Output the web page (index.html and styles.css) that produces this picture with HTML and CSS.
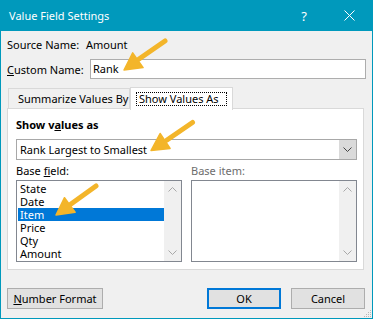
FILE: index.html
```html
<!DOCTYPE html>
<html>
<head>
<meta charset="utf-8">
<link rel="stylesheet" href="styles.css">
</head>
<body>
<div class="window">
  <div class="titlebar">
    <span class="title">Value Field Settings</span>
    <div class="tb-btns">
      <span class="tb-btn help">?</span>
      <span class="tb-btn close"><svg width="11" height="11" viewBox="0 0 11 11"><path d="M0.5 0.5 L10.5 10.5 M10.5 0.5 L0.5 10.5" stroke="#fff" stroke-width="1" fill="none"/></svg></span>
    </div>
  </div>
  <div class="body">
    <div class="row source"><span class="label label-source">Source Name:</span><span>Amount</span></div>
    <div class="row custom"><span class="label label-custom"><u>C</u>ustom Name:</span><div class="input">Rank</div></div>
    <div class="tabs">
      <div class="tab">Summarize Values By</div>
      <div class="tab active"><span class="focus">Show Values As</span></div>
    </div>
    <div class="panel">
      <div class="group-title">Show v<u>a</u>lues as</div>
      <div class="select">
        <span class="select-text">Rank Largest to Smallest</span>
        <span class="select-btn"><svg width="9" height="6" viewBox="0 0 9 6"><path d="M0.5 0.5 L4.5 4.5 L8.5 0.5" stroke="#444" stroke-width="1" fill="none"/></svg></span>
      </div>
      <div class="lists">
        <div class="col">
          <div class="lbl">Base <u>f</u>ield:</div>
          <div class="listbox">
            <div class="items">
              <div class="item">State</div>
              <div class="item">Date</div>
              <div class="item selected">Item</div>
              <div class="item">Price</div>
              <div class="item">Qty</div>
              <div class="item">Amount</div>
            </div>
            <div class="scroll">
              <span class="sarrow"><svg width="9" height="5" viewBox="0 0 9 5"><path d="M0.5 4.5 L4.5 0.5 L8.5 4.5" stroke="#a8a8a8" stroke-width="1" fill="none"/></svg></span>
              <span class="sarrow"><svg width="9" height="5" viewBox="0 0 9 5"><path d="M0.5 0.5 L4.5 4.5 L8.5 0.5" stroke="#a8a8a8" stroke-width="1" fill="none"/></svg></span>
            </div>
          </div>
        </div>
        <div class="col disabled">
          <div class="lbl">Base item:</div>
          <div class="listbox">
            <div class="items"></div>
            <div class="scroll">
              <span class="sarrow"><svg width="9" height="5" viewBox="0 0 9 5"><path d="M0.5 4.5 L4.5 0.5 L8.5 4.5" stroke="#a8a8a8" stroke-width="1" fill="none"/></svg></span>
              <span class="sarrow"><svg width="9" height="5" viewBox="0 0 9 5"><path d="M0.5 0.5 L4.5 4.5 L8.5 0.5" stroke="#a8a8a8" stroke-width="1" fill="none"/></svg></span>
            </div>
          </div>
        </div>
      </div>
    </div>
    <div class="buttons">
      <div class="btn btn-wide"><u>N</u>umber Format</div>
      <div class="btn btn-ok">OK</div>
      <div class="btn">Cancel</div>
    </div>
  </div>
  <svg class="grip" width="10" height="10" viewBox="0 0 10 10">
    <rect x="8" y="2" width="1" height="1" fill="#b8b8b8"/>
    <rect x="6" y="4" width="1" height="1" fill="#b8b8b8"/>
    <rect x="8" y="4" width="1" height="1" fill="#b8b8b8"/>
    <rect x="4" y="6" width="1" height="1" fill="#b8b8b8"/>
    <rect x="6" y="6" width="1" height="1" fill="#b8b8b8"/>
    <rect x="8" y="6" width="1" height="1" fill="#b8b8b8"/>
    <rect x="2" y="8" width="1" height="1" fill="#b8b8b8"/>
    <rect x="4" y="8" width="1" height="1" fill="#b8b8b8"/>
    <rect x="6" y="8" width="1" height="1" fill="#b8b8b8"/>
    <rect x="8" y="8" width="1" height="1" fill="#b8b8b8"/>
  </svg>
  <svg class="arrows" width="373" height="319" viewBox="0 0 373 319">
    <g fill="#f3b52a" stroke="#f3b52a" stroke-linejoin="round">
      <line x1="165" y1="41" x2="139" y2="59" stroke-width="5" stroke-linecap="round"/>
      <polygon points="124,70 132.7,52.9 143.1,67.6" stroke-width="1.5"/>
      <line x1="192.5" y1="122.5" x2="167" y2="140" stroke-width="5" stroke-linecap="round"/>
      <polygon points="151,150.5 160.1,133.5 170.1,148.5" stroke-width="1.5"/>
      <line x1="96" y1="186" x2="71" y2="204" stroke-width="5" stroke-linecap="round"/>
      <polygon points="56,215 64.5,197.7 75.1,212.3" stroke-width="1.5"/>
    </g>
  </svg>
</div>
</body>
</html>
```

FILE: styles.css
```css
* { box-sizing: border-box; }
html, body { margin: 0; padding: 0; }
body {
  font-family: "Noto Sans", "Liberation Sans", sans-serif;
  font-size: 11px;
  color: #000;
  background: #fff;
}
u { text-decoration: underline; text-underline-offset: 1px; }

.window {
  position: relative;
  width: 373px;
  height: 319px;
  background: #0099bc;
  display: flex;
  flex-direction: column;
}

.titlebar {
  height: 31px;
  display: flex;
  align-items: center;
  color: #fff;
  flex: none;
}
.title { padding-left: 9px; font-size: 11px; }
.tb-btns { margin-left: auto; display: flex; height: 100%; }
.tb-btn {
  width: 46px;
  height: 100%;
  display: flex;
  align-items: center;
  justify-content: center;
}
.help { font-size: 13px; padding-top: 1px; }
.close { padding-right: 2px; }

.body {
  flex: 1;
  margin: 0 1px 1px;
  background: #f0f0f0;
  padding: 6px 6px 0;
  display: flex;
  flex-direction: column;
}

.row { display: flex; align-items: center; }
.source { height: 16px; line-height: 16px; }
.label-source { width: 79px; }
.custom { margin-top: 6px; height: 20px; }
.label-custom { width: 83px; }
.input {
  flex: 1;
  height: 20px;
  line-height: 18px;
  border: 1px solid #adadad;
  background: #fff;
  padding-left: 2px;
}

.tabs {
  margin-top: 8px;
  height: 22px;
  margin-bottom: -1px;
  display: flex;
  align-items: flex-end;
  padding-left: 1px;
}
.tab {
  height: 21px;
  width: 122px;
  border: 1px solid #d9d9d9;
  border-bottom: none;
  background: #f0f0f0;
  padding-left: 9px;
  line-height: 20px;
}
.tab.active {
  position: relative;
  z-index: 1;
  width: 103px;
  height: 23px;
  align-self: flex-start;
  margin-bottom: -1px;
  background: #fff;
  padding: 4px 0 0 5px;
  line-height: 12px;
}
.focus {
  display: inline-block;
  height: 14px;
  width: 91px;
  border: 1px dotted #000;
  padding-left: 2px;
}

.panel {
  width: 357px;
  height: 162px;
  border: 1px solid #d9d9d9;
  background: #fff;
  padding: 8px 6px 0 8px;
}
.group-title { height: 16px; line-height: 16px; font-weight: bold; }
.select {
  margin-top: 6px;
  height: 21px;
  border: 1px solid #a8a8a8;
  display: flex;
  align-items: stretch;
}
.select-text { flex: 1; padding-left: 3px; line-height: 19px; }
.select-btn {
  width: 17px;
  background: #dadada;
  display: flex;
  align-items: center;
  justify-content: center;
}

.lists { display: flex; gap: 9px; margin-top: 3px; }
.col { width: 166px; }
.lbl { height: 16px; line-height: 16px; margin-bottom: 1px; }
.disabled .lbl { color: #6d6d6d; }
.listbox {
  height: 82px;
  border: 1px solid #828790;
  background: #fff;
  display: flex;
}
.items { flex: 1; padding: 1px 0 0 1px; }
.item { height: 13px; line-height: 13px; padding-left: 2px; }
.item.selected { background: #0078d7; color: #fff; }
.scroll {
  width: 17px;
  background: #f0f0f0;
  display: flex;
  flex-direction: column;
  justify-content: space-between;
}
.sarrow {
  height: 17px;
  display: flex;
  align-items: center;
  justify-content: center;
}

.buttons {
  margin-top: 18px;
  display: flex;
  gap: 10px;
  padding-right: 1px;
}
.btn {
  width: 74px;
  height: 21px;
  border: 1px solid #adadad;
  background: #e1e1e1;
  text-align: center;
  line-height: 19px;
}
.btn-wide { width: 96px; margin-right: auto; }
.btn-ok { border: 2px solid #0078d7; line-height: 17px; }

.grip { position: absolute; right: 1px; bottom: 1px; }
.arrows { position: absolute; left: 0; top: 0; pointer-events: none; }
```
